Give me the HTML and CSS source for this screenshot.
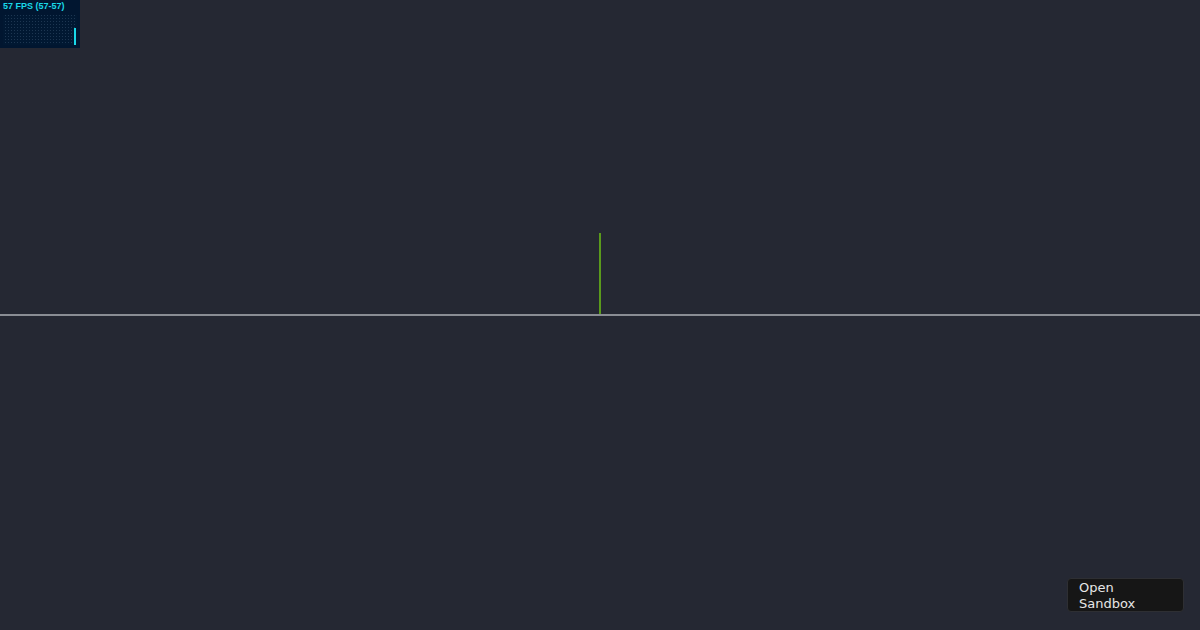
FILE: index.html
```html
<!DOCTYPE html>
<html>
<head>
<meta charset="utf-8">
<link rel="stylesheet" href="styles.css">
</head>
<body>
<div class="stats">
  <div class="fps">57 FPS (57-57)</div>
  <div class="graph"><div class="bar"></div></div>
</div>
<div class="scene">
  <div class="upper"><div class="needle"></div></div>
  <div class="axis"></div>
</div>
<button class="sandbox">Open<br>Sandbox</button>
</body>
</html>
```

FILE: styles.css
```css
html, body {
  margin: 0;
  padding: 0;
  width: 1200px;
  height: 630px;
  overflow: hidden;
  background: #252833;
  font-family: "DejaVu Sans", sans-serif;
}
.stats {
  position: absolute;
  left: 0;
  top: 0;
  width: 80px;
  height: 48px;
  background: #011630;
  box-sizing: border-box;
  padding: 1px 3px 0 3px;
}
.fps {
  color: #19d8e8;
  font-family: "Liberation Sans", sans-serif;
  font-weight: bold;
  font-size: 9px;
  line-height: 10px;
  height: 14px;
}
.graph {
  width: 74px;
  height: 30px;
  background-color: #011832;
  background-image: radial-gradient(circle, #1d3651 0.6px, transparent 0.9px);
  background-size: 3px 3px;
  background-position: 1px 2px;
  display: flex;
  justify-content: flex-end;
  align-items: flex-end;
}
.bar {
  width: 2px;
  height: 17px;
  background: #19d8e8;
  margin-right: 1px;
}
.scene {
  display: flex;
  flex-direction: column;
}
.upper {
  height: 314px;
  display: flex;
  justify-content: center;
  align-items: flex-end;
}
.needle {
  width: 2px;
  height: 81px;
  background: #5a9a1c;
  margin-left: -1px;
}
.axis {
  height: 2px;
  background: #8a8d94;
}
.sandbox {
  position: absolute;
  right: 16px;
  bottom: 18px;
  width: 117px;
  height: 34px;
  background: #161616;
  border: 1px solid #2e2f33;
  border-radius: 4px;
  color: #e6e6e6;
  font-family: "DejaVu Sans", sans-serif;
  font-size: 13px;
  line-height: 16px;
  text-align: left;
  padding: 1px 0 0 11px;
  box-sizing: border-box;
}
```
